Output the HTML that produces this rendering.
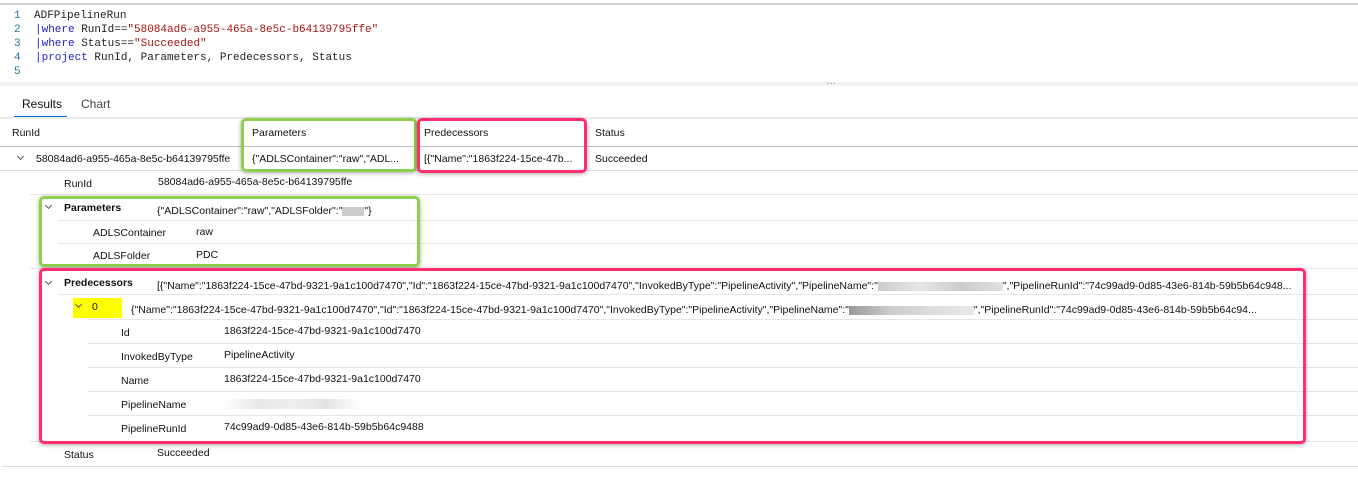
<!DOCTYPE html>
<html><head><meta charset="utf-8"><style>
body{margin:0;width:1358px;height:498px;background:#fff;position:relative;overflow:hidden;font-family:"Liberation Sans",sans-serif;font-size:10.5px;color:#111}
.t{position:absolute;white-space:nowrap;line-height:14px}
.c{position:absolute;white-space:nowrap;line-height:14px;font-family:"Liberation Mono",monospace;font-size:11px;color:#222}
.n{color:#237893}
.k{color:#1f1fd0}
.s{color:#a31515}
.h{position:absolute;height:1px;background:#e6e6e6}
.b{font-weight:bold}
.box{position:absolute;border-radius:5px;box-shadow:0 1px 4px rgba(0,0,0,.35)}
.chev{position:absolute;width:4px;height:4px;border-right:1px solid #555;border-bottom:1px solid #555;transform:rotate(45deg)}
.blur{position:absolute;height:10px;}
</style></head><body>
<div class="h" style="top:3px;left:0;width:1358px;height:2px;background:#d2d2d2"></div>
<div class="c" style="top:9px;left:14px"><span class="n">1</span></div><div class="c" style="top:9px;left:34px">ADFPipelineRun</div>
<div class="c" style="top:23px;left:14px"><span class="n">2</span></div><div class="c" style="top:23px;left:35px"><span class="k">|where</span> RunId==<span class="s">"58084ad6-a955-465a-8e5c-b64139795ffe"</span></div>
<div class="c" style="top:37px;left:14px"><span class="n">3</span></div><div class="c" style="top:37px;left:35px"><span class="k">|where</span> Status==<span class="s">"Succeeded"</span></div>
<div class="c" style="top:51px;left:14px"><span class="n">4</span></div><div class="c" style="top:51px;left:35px"><span class="k">|project</span> RunId, Parameters, Predecessors, Status</div>
<div class="c" style="top:65px;left:14px"><span class="n">5</span></div>
<div class="h" style="top:82px;left:0;width:1358px;height:4px;background:#f3f3f3"></div>
<div class="t" style="top:77px;left:826px;font-size:10px;color:#777">···</div>
<div class="t" style="top:97px;left:22px;font-size:12px">Results</div>
<div class="t" style="top:97px;left:81px;font-size:12px;color:#444">Chart</div>
<div class="h" style="top:116px;left:14px;width:53px;height:2px;background:#0f6cbd"></div>
<div class="h" style="top:117px;left:0;width:1358px;height:2px;background:#ebebeb"></div>
<div class="t" style="top:126px;left:12px">RunId</div>
<div class="t" style="top:126px;left:252px">Parameters</div>
<div class="t" style="top:126px;left:424px">Predecessors</div>
<div class="t" style="top:126px;left:595px">Status</div>
<div class="h" style="top:146px;left:0;width:1358px;background:#b8c0c8"></div>
<div class="chev" style="top:154px;left:18px"></div>
<div class="t" style="top:152px;left:36px">58084ad6-a955-465a-8e5c-b64139795ffe</div>
<div class="t" style="top:152px;left:252px">{"ADLSContainer":"raw","ADL...</div>
<div class="t" style="top:152px;left:424px">[{"Name":"1863f224-15ce-47b...</div>
<div class="t" style="top:152px;left:595px">Succeeded</div>
<div class="h" style="top:170px;left:0;width:1358px;background:#dcdcdc"></div>
<div class="t" style="top:177px;left:64px">RunId</div>
<div class="t" style="top:175px;left:158px">58084ad6-a955-465a-8e5c-b64139795ffe</div>
<div class="h" style="top:194px;left:30px;width:1328px"></div>
<div class="chev" style="top:203px;left:46px"></div>
<div class="t b" style="top:201px;left:64px">Parameters</div>
<div class="t" style="top:204px;left:157px">{"ADLSContainer":"raw","ADLSFolder":"<span style="display:inline-block;width:22px;height:9px;background:#ccc;vertical-align:middle"></span>"}</div>
<div class="h" style="top:220px;left:58px;width:1300px"></div>
<div class="t" style="top:226px;left:93px">ADLSContainer</div>
<div class="t" style="top:225px;left:196px">raw</div>
<div class="h" style="top:243px;left:58px;width:1300px"></div>
<div class="t" style="top:249px;left:93px">ADLSFolder</div>
<div class="t" style="top:248px;left:196px">PDC</div>
<div class="h" style="top:268px;left:30px;width:1328px"></div>
<div class="chev" style="top:279px;left:46px"></div>
<div class="t b" style="top:276px;left:64px">Predecessors</div>
<div class="t" style="top:279px;left:157px">[{"Name":"1863f224-15ce-47bd-9321-9a1c100d7470","Id":"1863f224-15ce-47bd-9321-9a1c100d7470","InvokedByType":"PipelineActivity","PipelineName":"<span style="display:inline-block;width:125px;height:9px;background:linear-gradient(90deg,#ccc,#e6e6e6,#ccc,#e0e0e0);vertical-align:middle"></span>","PipelineRunId":"74c99ad9-0d85-43e6-814b-59b5b64c948...</div>
<div class="h" style="top:294px;left:58px;width:1300px"></div>
<div style="position:absolute;top:298px;left:73px;width:49px;height:20px;background:#ffff00"></div>
<div class="chev" style="top:302px;left:76px"></div>
<div class="t" style="top:300px;left:92px">0</div>
<div class="t" style="top:303px;left:131px">{"Name":"1863f224-15ce-47bd-9321-9a1c100d7470","Id":"1863f224-15ce-47bd-9321-9a1c100d7470","InvokedByType":"PipelineActivity","PipelineName":"<span style="display:inline-block;width:125px;height:9px;background:linear-gradient(90deg,#999,#ccc,#ddd,#e8e8e8);vertical-align:middle"></span>","PipelineRunId":"74c99ad9-0d85-43e6-814b-59b5b64c94...</div>
<div class="h" style="top:319px;left:87px;width:1271px"></div>
<div class="t" style="top:326px;left:121px">Id</div>
<div class="t" style="top:324px;left:224px">1863f224-15ce-47bd-9321-9a1c100d7470</div>
<div class="h" style="top:343px;left:87px;width:1271px"></div>
<div class="t" style="top:350px;left:121px">InvokedByType</div>
<div class="t" style="top:348px;left:224px">PipelineActivity</div>
<div class="h" style="top:367px;left:87px;width:1271px"></div>
<div class="t" style="top:374px;left:121px">Name</div>
<div class="t" style="top:372px;left:224px">1863f224-15ce-47bd-9321-9a1c100d7470</div>
<div class="h" style="top:391px;left:87px;width:1271px"></div>
<div class="t" style="top:398px;left:121px">PipelineName</div>
<div class="blur" style="top:399px;left:222px;width:140px;background:linear-gradient(90deg,#fff,#e8e8e8,#eee,#e4e4e4,#fff)"></div>
<div class="h" style="top:415px;left:87px;width:1271px"></div>
<div class="t" style="top:422px;left:121px">PipelineRunId</div>
<div class="t" style="top:420px;left:224px">74c99ad9-0d85-43e6-814b-59b5b64c9488</div>
<div class="h" style="top:441px;left:30px;width:1328px"></div>
<div class="t" style="top:448px;left:64px">Status</div>
<div class="t" style="top:446px;left:157px">Succeeded</div>
<div class="h" style="top:466px;left:2px;width:1356px;background:#dcdcdc"></div>
<div class="box" style="top:118px;left:241px;width:170px;height:48px;border:3px solid #8fd14f"></div>
<div class="box" style="top:118px;left:417px;width:164px;height:49px;border:3px solid #ff2d6e"></div>
<div class="box" style="top:196px;left:39px;width:375px;height:65px;border:3px solid #8fd14f"></div>
<div class="box" style="top:268px;left:39px;width:1261px;height:170px;border:3px solid #ff2d6e"></div>
</body></html>
